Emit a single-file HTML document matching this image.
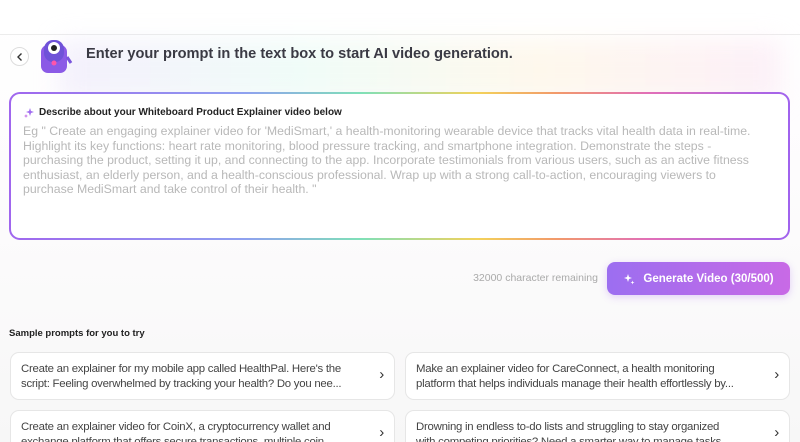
<!DOCTYPE html>
<html><head><meta charset="utf-8"><style>
*{margin:0;padding:0;box-sizing:border-box}
html,body{width:800px;height:442px;overflow:hidden}
body{font-family:"Liberation Sans",sans-serif;background:linear-gradient(180deg,#fff 0,#fdfcfd 40%,#f7f7f7 100%);position:relative}
.top{position:absolute;left:0;top:0;width:800px;height:35px;background:#fff;border-bottom:1px solid #ececec}
.glow{position:absolute;left:60px;top:40px;width:720px;height:60px;background:linear-gradient(90deg,rgba(230,220,250,.4),rgba(220,250,240,.4),rgba(255,240,210,.4),rgba(250,220,240,.4));filter:blur(12px)}
.back{position:absolute;left:10px;top:47px;width:19px;height:19px;border-radius:50%;border:1px solid #ddd;background:#fff;display:flex;align-items:center;justify-content:center}
.title{position:absolute;left:86px;top:46px;font-size:14.6px;font-weight:bold;color:#3a3a44}
.box{position:absolute;left:9px;top:92px;width:781px;height:148px;border-radius:11px;padding:2px;background:linear-gradient(90deg,#a066ee 0%,#8fa0f0 30%,#7fe0b8 45%,#f3d25a 60%,#f29a6a 70%,#e16fb8 82%,#a063ee 100%)}
.box>div{background:#fff;border-radius:9px;width:100%;height:100%;position:relative}
.label{position:absolute;left:13px;top:13px;font-size:10px;font-weight:bold;color:#222}
.ph{position:absolute;left:12px;top:30px;width:740px;font-size:12.3px;line-height:14.6px;color:#b8b8b8}
.rem{position:absolute;right:202px;top:272px;font-size:10.5px;color:#aaa}
.btn{position:absolute;left:607px;top:262px;width:183px;height:33px;border-radius:8px;background:linear-gradient(90deg,#9c6ef0,#c86ae6);color:#fff;font-size:11.5px;font-weight:bold;display:flex;align-items:center;justify-content:center;gap:8px;box-shadow:0 2px 8px rgba(170,110,240,.3)}
.sp{position:absolute;left:9px;top:328px;font-size:9.5px;font-weight:bold;color:#222}
.card{position:absolute;width:385px;height:48px;border:1px solid #e6e6e6;border-radius:9px;background:#fff;font-size:11.4px;letter-spacing:-0.25px;line-height:14.5px;color:#444;padding:9px 0 0 10px;overflow:hidden;white-space:nowrap}
.card .ar{position:absolute;right:10px;top:15px;font-size:15px;color:#333}
</style></head><body>
<div class="top"></div>
<div class="glow"></div>
<div class="back"><svg width="8" height="10" viewBox="0 0 8 10"><path d="M5.5 1.5 2 5l3.5 3.5" fill="none" stroke="#333" stroke-width="1.4"/></svg></div>
<svg style="position:absolute;left:38px;top:37px" width="36" height="38" viewBox="0 0 36 38"><rect x="3" y="8" width="26" height="28" rx="7" fill="#8b5ae6"/><rect x="6" y="3" width="20" height="22" rx="9" fill="#6f52d8"/><circle cx="16" cy="11" r="6" fill="#fff"/><circle cx="16" cy="11" r="3" fill="#222"/><circle cx="16" cy="26" r="2.5" fill="#f5a"/><path d="M29 20l4 6" stroke="#7a55dc" stroke-width="3"/></svg>
<div class="title">Enter your prompt in the text box to start AI video generation.</div>
<div class="box"><div>
<svg style="position:absolute;left:12px;top:13px" width="12" height="12" viewBox="0 0 12 12"><path d="M7 1l1 3 3 1-3 1-1 3-1-3-3-1 3-1z" fill="#a06cf0"/><path d="M3 7l.6 1.4L5 9l-1.4.6L3 11l-.6-1.4L1 9l1.4-.6z" fill="#c77ae8"/></svg>
<div class="label" style="left:28px">Describe about your Whiteboard Product Explainer video below</div>
<div class="ph">Eg " Create an engaging explainer video for 'MediSmart,' a health-monitoring wearable device that tracks vital health data in real-time. Highlight its key functions: heart rate monitoring, blood pressure tracking, and smartphone integration. Demonstrate the steps - purchasing the product, setting it up, and connecting to the app. Incorporate testimonials from various users, such as an active fitness enthusiast, an elderly person, and a health-conscious professional. Wrap up with a strong call-to-action, encouraging viewers to purchase MediSmart and take control of their health. "</div>
</div></div>
<div class="rem">32000 character remaining</div>
<div class="btn"><svg width="12" height="12" viewBox="0 0 12 12"><path d="M5 1l1 3 3 1-3 1-1 3-1-3-3-1 3-1z" fill="#fff"/><path d="M9.5 7.5l.5 1.5 1.5.5-1.5.5-.5 1.5-.5-1.5-1.5-.5 1.5-.5z" fill="#fff"/></svg>Generate Video (30/500)</div>
<div class="sp">Sample prompts for you to try</div>
<div class="card" style="left:10px;top:352px">Create an explainer for my mobile app called HealthPal. Here's the<br>script: Feeling overwhelmed by tracking your health? Do you nee...<span class="ar">›</span></div>
<div class="card" style="left:405px;top:352px">Make an explainer video for CareConnect, a health monitoring<br>platform that helps individuals manage their health effortlessly by...<span class="ar">›</span></div>
<div class="card" style="left:10px;top:410px">Create an explainer video for CoinX, a cryptocurrency wallet and<br>exchange platform that offers secure transactions, multiple coin...<span class="ar">›</span></div>
<div class="card" style="left:405px;top:410px">Drowning in endless to-do lists and struggling to stay organized<br>with competing priorities? Need a smarter way to manage tasks...<span class="ar">›</span></div>
</body></html>
